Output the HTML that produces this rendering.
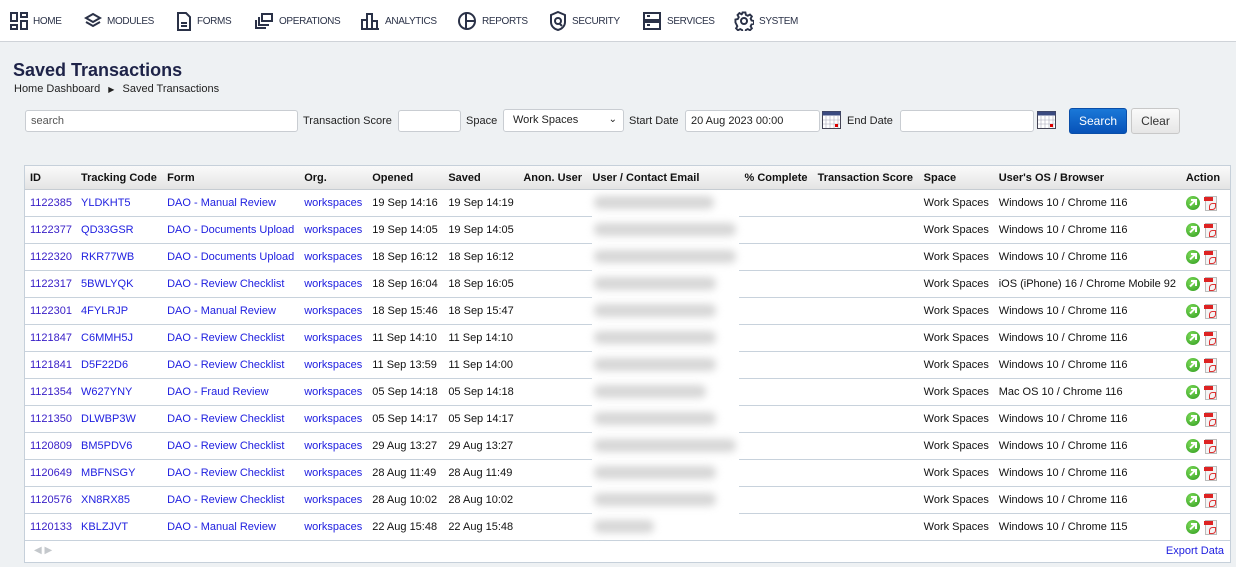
<!DOCTYPE html>
<html><head><meta charset="utf-8">
<style>
*{box-sizing:border-box;margin:0;padding:0}
body{width:1236px;height:567px;overflow:hidden;background:#eef1f3;font-family:"Liberation Sans",Arial,sans-serif;font-size:12px;color:#111;position:relative}
.nav{position:absolute;left:0;top:0;width:1236px;height:42px;background:#fff;border-bottom:1px solid #cfd3d8}
.ni{position:absolute;top:10px;height:22px;display:flex;align-items:center;font-size:10px;color:#2a3147;letter-spacing:-.35px}
.ni svg{margin-right:5px}
h1{position:absolute;left:13px;top:60px;font-size:18px;font-weight:bold;color:#1e2348}
.bc{position:absolute;left:14px;top:83px;font-size:11px;color:#222}
.inp{position:absolute;height:22px;background:#fff;border:1px solid #c9cdd2;border-radius:3px;font-size:11px;padding:0 5px;line-height:20px;color:#222}
.lbl{position:absolute;top:115px;font-size:11px;color:#222}
.cal{position:absolute;top:111px}
.btn{position:absolute;top:108px;height:26px;border-radius:3px;font-size:12px;line-height:24px;text-align:center}
.tbl{position:absolute;left:24px;top:165px;width:1207px;height:398px;background:#fff;border:1px solid #c6d0da}
table{border-collapse:collapse;table-layout:fixed;width:1205px;position:absolute;left:0;top:0}
th{height:23px;text-align:left;font-size:11px;font-weight:bold;padding:1px 0 0 5px;background:linear-gradient(#fafafa,#e4e4e4);border-bottom:1px solid #c6ccd2;white-space:nowrap;overflow:hidden}
td{height:27px;padding:1px 0 0 5px;font-size:11px;border-bottom:1px solid #c8d2dc;white-space:nowrap;overflow:hidden}
td a{color:#2020e0;text-decoration:none}
td.id a{color:#3a20c8}
.act{padding-left:5px}
.go{display:inline-block;width:14px;height:14px;border-radius:50%;background:radial-gradient(circle at 40% 35%,#7fdc5a,#2e9a1e);vertical-align:middle;position:relative}
.go:after{content:"";position:absolute;left:5px;top:3px;width:4px;height:4px;border-top:2px solid #fff;border-right:2px solid #fff}
.go:before{content:"";position:absolute;left:3px;top:6px;width:7px;height:2px;background:#fff;transform:rotate(-45deg)}
.pdf{display:inline-block;width:12px;height:15px;margin-left:5px;vertical-align:middle;background:#f4f4f4;border:1px solid #bbb;position:relative}
.pdf:before{content:"";position:absolute;left:-2px;top:0;width:9px;height:4px;background:#d22}
.pdf:after{content:"";position:absolute;left:3px;top:6px;width:5px;height:5px;border:1px solid #d33;border-radius:50% 0}
.em{position:absolute;left:592px;top:194px;width:147px;height:345px;background:#fff}
.bar{position:absolute;left:2px;height:13px;background:#d6d6d6;filter:blur(4px);border-radius:6px}
.foot{position:absolute;left:0;top:375px;width:100%;height:22px}
</style></head><body>
<div class="nav">
 <div class="ni" style="left:10px"><svg width="18" height="18" viewBox="0 0 18 18" fill="none" stroke="#2a3147" stroke-width="2"><rect x="1" y="1" width="6" height="8"/><rect x="11" y="1" width="6" height="4"/><rect x="1" y="13" width="6" height="4"/><rect x="11" y="9" width="6" height="8"/></svg>HOME</div>
 <div class="ni" style="left:84px"><svg width="18" height="18" viewBox="0 0 18 18" fill="none" stroke="#2a3147" stroke-width="2"><path d="M9 2L16 6 9 10 2 6Z"/><path d="M2 10l7 4 7-4"/></svg>MODULES</div>
 <div class="ni" style="left:176px"><svg width="16" height="19" viewBox="0 0 16 19" fill="none" stroke="#2a3147" stroke-width="2"><path d="M2 1h8l4 4v13H2Z"/><path d="M5 11h6M5 14h6"/></svg>FORMS</div>
 <div class="ni" style="left:254px"><svg width="20" height="18" viewBox="0 0 20 18" fill="none" stroke="#2a3147" stroke-width="2"><rect x="8" y="2" width="10" height="7"/><path d="M5 5v8h10M2 8v8h10"/></svg>OPERATIONS</div>
 <div class="ni" style="left:360px"><svg width="20" height="18" viewBox="0 0 20 18" fill="none" stroke="#2a3147" stroke-width="2"><path d="M1 17h18M2 17V8h5v9M7 17V2h5v15M12 17V9h5v8"/></svg>ANALYTICS</div>
 <div class="ni" style="left:457px"><svg width="20" height="20" viewBox="0 0 20 20" fill="none" stroke="#2a3147" stroke-width="2"><circle cx="10" cy="10" r="8"/><path d="M9 2v16M9 10h9"/></svg>REPORTS</div>
 <div class="ni" style="left:549px"><svg width="18" height="20" viewBox="0 0 18 20" fill="none" stroke="#2a3147" stroke-width="2"><path d="M9 1l7 3v7c0 4-3 7-7 8-4-1-7-4-7-8V4Z"/><circle cx="9" cy="10" r="3"/><path d="M11 13l2 2"/></svg>SECURITY</div>
 <div class="ni" style="left:642px"><svg width="20" height="20" viewBox="0 0 20 20" fill="none" stroke="#2a3147" stroke-width="2"><rect x="2" y="2" width="16" height="7"/><rect x="2" y="11" width="16" height="7"/><path d="M5 5h3M5 14h3"/></svg>SERVICES</div>
 <div class="ni" style="left:734px"><svg width="20" height="20" viewBox="0 0 20 20" fill="none" stroke="#2a3147" stroke-width="2"><path d="M8.5 1h3l.5 2.5 2 1 2.3-1.3 2 2-1.3 2.3 1 2 2.5.5v3l-2.5.5-1 2 1.3 2.3-2 2-2.3-1.3-2 1-.5 2.5h-3l-.5-2.5-2-1-2.3 1.3-2-2 1.3-2.3-1-2L1 11.5v-3l2.5-.5 1-2L3.2 3.7l2-2L7.5 3l.5-.5Z" transform="scale(.95) translate(.5 .5)"/><circle cx="10" cy="10" r="3"/></svg>SYSTEM</div>
</div>
<h1>Saved Transactions</h1>
<div class="bc">Home Dashboard <span style="font-size:8px;margin:0 5px">&#9654;</span> Saved Transactions</div>

<div class="inp" style="left:25px;top:110px;width:273px;color:#555">search</div>
<div class="lbl" style="left:303px">Transaction Score</div>
<div class="inp" style="left:398px;top:110px;width:63px"></div>
<div class="lbl" style="left:466px">Space</div>
<div class="inp" style="left:503px;top:109px;width:121px;height:23px;padding-left:9px">Work Spaces<span style="position:absolute;right:6px;top:0;font-size:10px">&#8964;</span></div>
<div class="lbl" style="left:629px">Start Date</div>
<div class="inp" style="left:685px;top:110px;width:135px">20 Aug 2023 00:00</div>
<svg class="cal" style="left:822px" width="19" height="18" viewBox="0 0 19 18"><rect x=".5" y=".5" width="18" height="17" fill="#fff" stroke="#445"/><rect x=".5" y=".5" width="18" height="4" fill="#3a4a80"/><path d="M4 5v12M8 5v12M12 5v12M16 5v12M1 9h17M1 13h17" stroke="#aab" stroke-width=".6"/><rect x="13" y="13" width="3" height="3" fill="#d00"/></svg>
<div class="lbl" style="left:847px">End Date</div>
<div class="inp" style="left:900px;top:110px;width:134px"></div>
<svg class="cal" style="left:1037px" width="19" height="18" viewBox="0 0 19 18"><rect x=".5" y=".5" width="18" height="17" fill="#fff" stroke="#445"/><rect x=".5" y=".5" width="18" height="4" fill="#3a4a80"/><path d="M4 5v12M8 5v12M12 5v12M16 5v12M1 9h17M1 13h17" stroke="#aab" stroke-width=".6"/><rect x="13" y="13" width="3" height="3" fill="#d00"/></svg>
<div class="btn" style="left:1069px;width:58px;background:linear-gradient(#1a78d8,#0752b8);border:1px solid #0a4ea8;color:#fff">Search</div>
<div class="btn" style="left:1131px;width:49px;background:linear-gradient(#fafafa,#e6e6e6);border:1px solid #c8c8c8;color:#333">Clear</div>

<div class="tbl">
<table>
<colgroup><col style="width:51px"><col style="width:86px"><col style="width:137px"><col style="width:68px"><col style="width:76px"><col style="width:75px"><col style="width:69px"><col style="width:152px"><col style="width:73px"><col style="width:106px"><col style="width:75px"><col style="width:187px"><col style="width:49px"></colgroup>
<tr><th>ID</th><th>Tracking Code</th><th>Form</th><th>Org.</th><th>Opened</th><th>Saved</th><th>Anon. User</th><th>User / Contact Email</th><th>% Complete</th><th>Transaction Score</th><th>Space</th><th>User's OS / Browser</th><th>Action</th></tr>
<tr><td class="id"><a>1122385</a></td><td><a>YLDKHT5</a></td><td><a>DAO - Manual Review</a></td><td><a>workspaces</a></td><td>19 Sep 14:16</td><td>19 Sep 14:19</td><td></td><td></td><td></td><td></td><td>Work Spaces</td><td>Windows 10 / Chrome 116</td><td class="act"><span class="go"></span><span class="pdf"></span></td></tr>
<tr><td class="id"><a>1122377</a></td><td><a>QD33GSR</a></td><td><a>DAO - Documents Upload</a></td><td><a>workspaces</a></td><td>19 Sep 14:05</td><td>19 Sep 14:05</td><td></td><td></td><td></td><td></td><td>Work Spaces</td><td>Windows 10 / Chrome 116</td><td class="act"><span class="go"></span><span class="pdf"></span></td></tr>
<tr><td class="id"><a>1122320</a></td><td><a>RKR77WB</a></td><td><a>DAO - Documents Upload</a></td><td><a>workspaces</a></td><td>18 Sep 16:12</td><td>18 Sep 16:12</td><td></td><td></td><td></td><td></td><td>Work Spaces</td><td>Windows 10 / Chrome 116</td><td class="act"><span class="go"></span><span class="pdf"></span></td></tr>
<tr><td class="id"><a>1122317</a></td><td><a>5BWLYQK</a></td><td><a>DAO - Review Checklist</a></td><td><a>workspaces</a></td><td>18 Sep 16:04</td><td>18 Sep 16:05</td><td></td><td></td><td></td><td></td><td>Work Spaces</td><td>iOS (iPhone) 16 / Chrome Mobile 92</td><td class="act"><span class="go"></span><span class="pdf"></span></td></tr>
<tr><td class="id"><a>1122301</a></td><td><a>4FYLRJP</a></td><td><a>DAO - Manual Review</a></td><td><a>workspaces</a></td><td>18 Sep 15:46</td><td>18 Sep 15:47</td><td></td><td></td><td></td><td></td><td>Work Spaces</td><td>Windows 10 / Chrome 116</td><td class="act"><span class="go"></span><span class="pdf"></span></td></tr>
<tr><td class="id"><a>1121847</a></td><td><a>C6MMH5J</a></td><td><a>DAO - Review Checklist</a></td><td><a>workspaces</a></td><td>11 Sep 14:10</td><td>11 Sep 14:10</td><td></td><td></td><td></td><td></td><td>Work Spaces</td><td>Windows 10 / Chrome 116</td><td class="act"><span class="go"></span><span class="pdf"></span></td></tr>
<tr><td class="id"><a>1121841</a></td><td><a>D5F22D6</a></td><td><a>DAO - Review Checklist</a></td><td><a>workspaces</a></td><td>11 Sep 13:59</td><td>11 Sep 14:00</td><td></td><td></td><td></td><td></td><td>Work Spaces</td><td>Windows 10 / Chrome 116</td><td class="act"><span class="go"></span><span class="pdf"></span></td></tr>
<tr><td class="id"><a>1121354</a></td><td><a>W627YNY</a></td><td><a>DAO - Fraud Review</a></td><td><a>workspaces</a></td><td>05 Sep 14:18</td><td>05 Sep 14:18</td><td></td><td></td><td></td><td></td><td>Work Spaces</td><td>Mac OS 10 / Chrome 116</td><td class="act"><span class="go"></span><span class="pdf"></span></td></tr>
<tr><td class="id"><a>1121350</a></td><td><a>DLWBP3W</a></td><td><a>DAO - Review Checklist</a></td><td><a>workspaces</a></td><td>05 Sep 14:17</td><td>05 Sep 14:17</td><td></td><td></td><td></td><td></td><td>Work Spaces</td><td>Windows 10 / Chrome 116</td><td class="act"><span class="go"></span><span class="pdf"></span></td></tr>
<tr><td class="id"><a>1120809</a></td><td><a>BM5PDV6</a></td><td><a>DAO - Review Checklist</a></td><td><a>workspaces</a></td><td>29 Aug 13:27</td><td>29 Aug 13:27</td><td></td><td></td><td></td><td></td><td>Work Spaces</td><td>Windows 10 / Chrome 116</td><td class="act"><span class="go"></span><span class="pdf"></span></td></tr>
<tr><td class="id"><a>1120649</a></td><td><a>MBFNSGY</a></td><td><a>DAO - Review Checklist</a></td><td><a>workspaces</a></td><td>28 Aug 11:49</td><td>28 Aug 11:49</td><td></td><td></td><td></td><td></td><td>Work Spaces</td><td>Windows 10 / Chrome 116</td><td class="act"><span class="go"></span><span class="pdf"></span></td></tr>
<tr><td class="id"><a>1120576</a></td><td><a>XN8RX85</a></td><td><a>DAO - Review Checklist</a></td><td><a>workspaces</a></td><td>28 Aug 10:02</td><td>28 Aug 10:02</td><td></td><td></td><td></td><td></td><td>Work Spaces</td><td>Windows 10 / Chrome 116</td><td class="act"><span class="go"></span><span class="pdf"></span></td></tr>
<tr><td class="id"><a>1120133</a></td><td><a>KBLZJVT</a></td><td><a>DAO - Manual Review</a></td><td><a>workspaces</a></td><td>22 Aug 15:48</td><td>22 Aug 15:48</td><td></td><td></td><td></td><td></td><td>Work Spaces</td><td>Windows 10 / Chrome 115</td><td class="act"><span class="go"></span><span class="pdf"></span></td></tr>
</table>
<div class="foot"><span style="position:absolute;left:9px;top:4px;color:#c4c8cc;font-size:10px">&#9664; &#9654;</span><a style="position:absolute;right:6px;top:4px;color:#2020e0;font-size:11px">Export Data</a></div>
</div>
<div class="em">
 <div class="bar" style="top:2px;width:120px"></div>
 <div class="bar" style="top:29px;width:142px"></div>
 <div class="bar" style="top:56px;width:142px"></div>
 <div class="bar" style="top:83px;width:122px"></div>
 <div class="bar" style="top:110px;width:122px"></div>
 <div class="bar" style="top:137px;width:122px"></div>
 <div class="bar" style="top:164px;width:122px"></div>
 <div class="bar" style="top:191px;width:112px"></div>
 <div class="bar" style="top:218px;width:122px"></div>
 <div class="bar" style="top:245px;width:142px"></div>
 <div class="bar" style="top:272px;width:122px"></div>
 <div class="bar" style="top:299px;width:122px"></div>
 <div class="bar" style="top:326px;width:60px"></div>
</div>
</body></html>
